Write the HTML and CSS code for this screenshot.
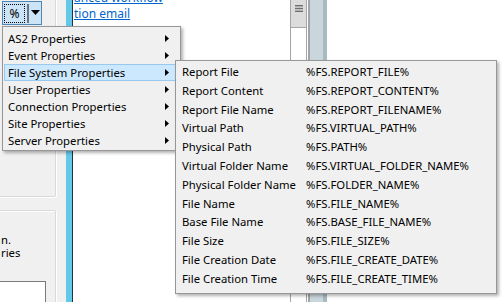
FILE: index.html
```html
<!DOCTYPE html>
<html>
<head>
<meta charset="utf-8">
<link rel="stylesheet" href="styles.css">
</head>
<body>
<div class="window">
  <div class="left">
    <div class="group g1">
      <div class="combo">
        <span class="pct"><span class="focus">%</span></span>
        <span class="sep"></span>
        <span class="drop"><svg width="9" height="5" viewBox="0 0 9 5"><polygon points="0,0 9,0 4.5,5" fill="#000"/></svg></span>
      </div>
    </div>
    <div class="group g2">
      <div class="desc"><div>n.</div><div>ries</div></div>
      <div class="input"></div>
    </div>
  </div>
  <div class="accent"></div>
  <div class="content">
    <a class="link">anced workflow</a>
    <a class="link">tion email</a>
  </div>
  <div class="scroll">
    <div class="thumb">
      <svg width="8" height="7" viewBox="0 0 8 7"><rect x="0" y="0" width="8" height="1.4" fill="#6e6e6e"/><rect x="0" y="2.8" width="8" height="1.4" fill="#6e6e6e"/><rect x="0" y="5.6" width="8" height="1.4" fill="#6e6e6e"/></svg>
    </div>
  </div>
  <div class="splitter"></div>
  <div class="right"></div>
</div>

<div class="menu main-menu">
  <div class="mi"><span>AS2 Properties</span><svg class="sub-arrow" width="4" height="7" viewBox="0 0 4 7"><polygon points="0,0 4,3.5 0,7" fill="#000"/></svg></div>
  <div class="mi"><span>Event Properties</span><svg class="sub-arrow" width="4" height="7" viewBox="0 0 4 7"><polygon points="0,0 4,3.5 0,7" fill="#000"/></svg></div>
  <div class="mi hot"><span>File System Properties</span><svg class="sub-arrow" width="4" height="7" viewBox="0 0 4 7"><polygon points="0,0 4,3.5 0,7" fill="#000"/></svg></div>
  <div class="mi"><span>User Properties</span><svg class="sub-arrow" width="4" height="7" viewBox="0 0 4 7"><polygon points="0,0 4,3.5 0,7" fill="#000"/></svg></div>
  <div class="mi"><span>Connection Properties</span><svg class="sub-arrow" width="4" height="7" viewBox="0 0 4 7"><polygon points="0,0 4,3.5 0,7" fill="#000"/></svg></div>
  <div class="mi"><span>Site Properties</span><svg class="sub-arrow" width="4" height="7" viewBox="0 0 4 7"><polygon points="0,0 4,3.5 0,7" fill="#000"/></svg></div>
  <div class="mi"><span>Server Properties</span><svg class="sub-arrow" width="4" height="7" viewBox="0 0 4 7"><polygon points="0,0 4,3.5 0,7" fill="#000"/></svg></div>
</div>

<div class="menu sub-menu">
  <div class="si"><span>Report File</span><span>%FS.REPORT_FILE%</span></div>
  <div class="si"><span>Report Content</span><span>%FS.REPORT_CONTENT%</span></div>
  <div class="si"><span>Report File Name</span><span>%FS.REPORT_FILENAME%</span></div>
  <div class="si"><span>Virtual Path</span><span>%FS.VIRTUAL_PATH%</span></div>
  <div class="si"><span>Physical Path</span><span>%FS.PATH%</span></div>
  <div class="si"><span>Virtual Folder Name</span><span>%FS.VIRTUAL_FOLDER_NAME%</span></div>
  <div class="si"><span>Physical Folder Name</span><span>%FS.FOLDER_NAME%</span></div>
  <div class="si"><span>File Name</span><span>%FS.FILE_NAME%</span></div>
  <div class="si"><span>Base File Name</span><span>%FS.BASE_FILE_NAME%</span></div>
  <div class="si"><span>File Size</span><span>%FS.FILE_SIZE%</span></div>
  <div class="si"><span>File Creation Date</span><span>%FS.FILE_CREATE_DATE%</span></div>
  <div class="si"><span>File Creation Time</span><span>%FS.FILE_CREATE_TIME%</span></div>
</div>
</body>
</html>
```

FILE: styles.css
```css
* { box-sizing: border-box; }
html, body {
  margin: 0;
  padding: 0;
  width: 503px;
  height: 302px;
  overflow: hidden;
  background: #fff;
  font-family: "Noto Sans", "Open Sans", sans-serif;
  font-size: 11.3px;
  color: #000;
}
.window {
  display: flex;
  height: 302px;
  position: relative;
}
.left {
  width: 66px;
  flex: none;
  background: #f0f0f0;
  display: flex;
  flex-direction: column;
  overflow: hidden;
}
.group {
  border: 1px solid #d9d9d9;
  box-shadow: 1px 1px 0 #fff, inset 1px 1px 0 #fff;
  border-radius: 2px;
  width: 61px;
  margin-left: -5px;
}
.g1 {
  margin-top: -10px;
  height: 215px;
  padding-top: 10px;
  padding-left: 6px;
}
.g2 {
  margin-top: 13px;
  flex: 1;
  margin-bottom: -10px;
  padding-left: 5px;
}
.combo {
  display: flex;
  width: 40px;
  height: 24px;
  background: #cce4f7;
  border: 1px solid #4f86b4;
  align-items: stretch;
}
.pct {
  width: 24px;
  padding: 2px 1px 0 1px;
  display: flex;
}
.focus {
  flex: none;
  width: 21px;
  height: 19px;
  border: 1px dotted #000;
  display: flex;
  align-items: center;
  justify-content: center;
  line-height: 1;
  font-size: 12px;
}
.sep {
  width: 2px;
  background: #6b7682;
  margin: 2px 0 1px 0;
}
.drop {
  flex: 1;
  display: flex;
  align-items: center;
  justify-content: center;
  padding-bottom: 1px;
}
.drop svg { display: block; }
.desc {
  margin-top: 22px;
  display: flex;
  flex-direction: column;
  white-space: nowrap;
}
.desc div {
  height: 13px;
  line-height: 13px;
}
.input {
  margin-top: 22px;
  margin-left: -5px;
  width: 50px;
  height: 30px;
  background: #fff;
  border: 1px solid #7a7a7a;
}
.accent {
  width: 7px;
  flex: none;
  background: #64c8e8;
  border-right: 1px solid #233343;
}
.content {
  width: 217px;
  flex: none;
  background: #fff;
  display: flex;
  flex-direction: column;
  align-items: flex-start;
  padding-left: 1px;
  margin-top: -10px;
  line-height: 16px;
}
.link {
  color: #0066cc;
  text-decoration: underline;
  white-space: nowrap;
  font-size: 12px;
}
.scroll {
  width: 17px;
  flex: none;
  background: #fff;
  border-left: 1px solid #a5a5a5;
  border-right: 1px solid #a5a5a5;
}
.thumb {
  height: 28px;
  background: #dcdcdc;
  border-bottom: 1px solid #a5a5a5;
  display: flex;
  justify-content: center;
  padding-top: 5px;
}
.thumb svg { display: block; }
.splitter {
  width: 19px;
  flex: none;
  background: #c9d7dd;
  border-left: 2px solid #a3a3a3;
  border-right: 4px solid #a7b9c1;
  margin-left: 1px;
}
.right {
  flex: 1;
  background: #fff;
}

.menu {
  position: absolute;
  background: #f0f0f0;
  border: 1px solid #979797;
  box-shadow: 2px 2px 3px rgba(0, 0, 0, 0.3);
}
.main-menu {
  left: 2px;
  top: 26px;
  width: 179px;
  padding: 3px 0 1px 1px;
}
.mi {
  height: 17px;
  display: flex;
  align-items: center;
  justify-content: space-between;
  border: 1px solid transparent;
  padding: 0 10px 0 3px;
  line-height: 15px;
  white-space: nowrap;
}
.mi.hot {
  background: #cce8ff;
  border-color: #99c9ef;
}
.sub-arrow { display: block; flex: none; }
.sub-menu {
  left: 175px;
  top: 60px;
  width: 322px;
  height: 234px;
  padding: 2px 0 0 6px;
}
.si {
  height: 18.8px;
  display: grid;
  grid-template-columns: 124px auto;
  align-items: center;
  line-height: 18.8px;
  white-space: nowrap;
}
```
